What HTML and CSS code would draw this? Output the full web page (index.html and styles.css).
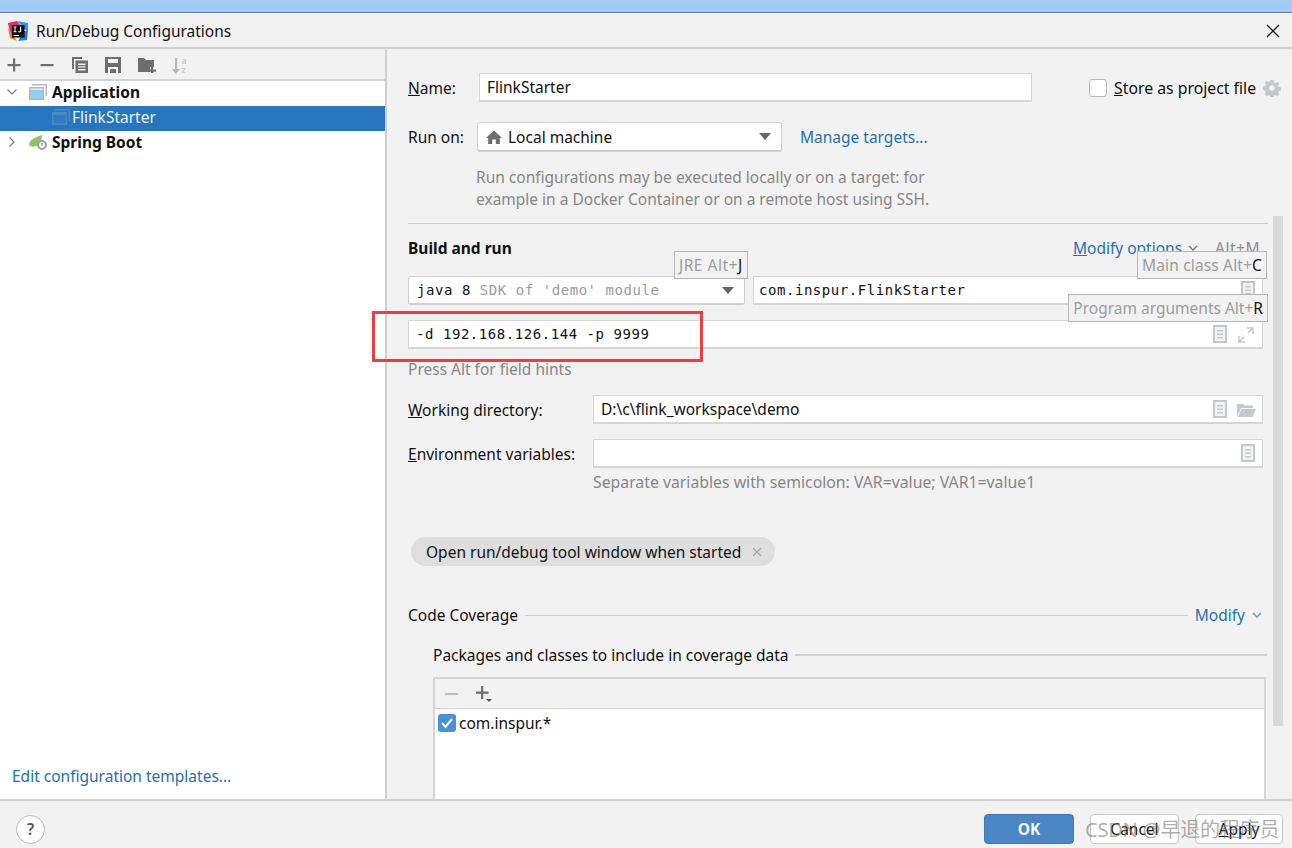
FILE: index.html
```html
<!DOCTYPE html>
<html lang="en">
<head>
<meta charset="utf-8">
<title>Run/Debug Configurations</title>
<link rel="stylesheet" href="styles.css">
</head>
<body>
<svg class="defs" width="0" height="0">
  <symbol id="doc" viewBox="0 0 14 18"><path d="M0 0h14v18H0z" fill="#c3c8cc"/><path d="M2 2h10v14H2z" fill="#f2f2f2"/><path d="M4 5h6v1.500H4zM4 8.500h6V10H4zM4 12h6v1.500H4z" fill="#c3c8cc"/></symbol>
  <symbol id="win" viewBox="0 0 18 16"><path d="M3 0h15v12h-1.500V1.500H3z" fill="#b4bac0"/><path d="M0 3h15v13H0z" fill="#b4bac0"/><path d="M1.500 6h12v8.500h-12z" fill="#8ed0ee"/><path d="M1.500 4.300h12V6h-12z" fill="#e6e8ea"/></symbol>
</svg>
<div class="app">
  <div class="topstrip"></div>
  <header class="titlebar">
    <svg class="logo" width="20" height="20" viewBox="0 0 20 20"><path d="M0 2l9-2 3 4-9 12z" fill="#f0226a"/><path d="M9 0l11 2v10l-6-7z" fill="#2b9af3"/><path d="M20 10l-1 9-9 1 6-10z" fill="#2b7de0"/><path d="M0 7l2 10 7 3z" fill="#f97a12"/><path d="M4 4h12.500v12.500H4z" fill="#000"/><path d="M5.500 14h5.500v1H5.500z" fill="#fff"/><path d="M5.500 5.500h3v1h-1v3.800h1v1h-3v-1h1V6.500h-1zM12 5.500h1.200v4.300c0 1-.6 1.700-1.700 1.700-.8 0-1.300-.3-1.600-.9l.8-.6c.2.300.4.500.7.500.4 0 .6-.3.600-.7z" fill="#fff"/></svg>
    <span class="title">Run/Debug Configurations</span>
    <svg class="close" width="14" height="14" viewBox="0 0 14 14"><path d="M1 1l12 12M13 1L1 13" stroke="#1a1a1a" stroke-width="1.300" fill="none"/></svg>
  </header>
  <div class="content">
    <aside class="sidebar">
      <div class="toolbar">
        <svg width="16" height="16" viewBox="0 0 16 16"><path d="M7 1.500h2.200v13H7zM1.500 7h13v2.200h-13z" fill="#6e6e6e"/></svg>
        <svg width="16" height="16" viewBox="0 0 16 16"><path d="M1.500 7h13v2.200h-13z" fill="#6e6e6e"/></svg>
        <svg width="16" height="16" viewBox="0 0 16 16"><path d="M0 0h10v2H2v10H0z" fill="#6e6e6e"/><path d="M3.500 3.500H16V16H3.500z" fill="#6e6e6e"/><path d="M6 6.500h7.500v1.400H6zM6 9.200h7.500v1.400H6zM6 12h7.500v1.400H6z" fill="#f2f2f2"/></svg>
        <svg width="16" height="16" viewBox="0 0 16 16"><path d="M0 0h16v16H0z" fill="#6e6e6e"/><path d="M3 2h10v4H3zM3 10h10v6H3z" fill="#f2f2f2"/><path d="M5 12h6v4H5z" fill="#6e6e6e"/></svg>
        <svg class="tightr" width="18" height="16" viewBox="0 0 18 16"><path d="M0 1h6l2 2h8v7h-4v5H0z" fill="#6e6e6e"/><path d="M13 10h2.200v2.500H18v2.200h-2.800V17H13v-2.300h-2.500v-2.200H13z" fill="#6e6e6e"/></svg>
        <svg width="18" height="20" viewBox="0 0 18 20"><path d="M4 3h2.200v11H9l-4 5-4-5h3z" fill="#b9b9b9"/><text class="az" x="10.500" y="9">a</text><text class="az" x="10.500" y="18">z</text></svg>
      </div>
      <ul class="tree">
        <li class="node">
          <svg class="chev" width="12" height="12" viewBox="0 0 12 12"><path d="M1.500 3.500L6 8l4.500-4.500" stroke="#7a7a7a" stroke-width="1.200" fill="none"/></svg>
          <svg class="nodeicon" width="18" height="16"><use href="#win"/></svg>
          <b>Application</b>
        </li>
        <li class="node selected">
          <svg class="selicon" width="18" height="16" viewBox="0 0 18 16"><path d="M3 0h15v12h-1.500V1.500H3z" fill="#4a8ac4"/><path d="M0 3h15v13H0z" fill="#4a8ac4"/><path d="M1.500 6h12v8.500h-12z" fill="#2f7cc4"/></svg>
          <span>FlinkStarter</span>
        </li>
        <li class="node">
          <svg class="chev" width="12" height="12" viewBox="0 0 12 12"><path d="M3.500 1.500L8 6l-4.500 4.500" stroke="#7a7a7a" stroke-width="1.200" fill="none"/></svg>
          <svg class="nodeicon" width="18" height="16" viewBox="0 0 18 16"><path d="M0 11C0 6 6 3 13 1c0 6-2 9-5 11-4 1-7 1-8-1z" fill="#8dc76b"/><circle cx="13" cy="11" r="5" fill="#9aa3aa"/><circle cx="13" cy="11" r="3" fill="#f2f2f2"/><path d="M13 9v2.500" stroke="#7c868e" stroke-width="1.200"/></svg>
          <b>Spring Boot</b>
        </li>
      </ul>
      <a class="link templates">Edit configuration templates...</a>
    </aside>
    <main class="form">
      <div class="row namerow">
        <label class="lbl name-lbl"><u>N</u>ame:</label>
        <div class="input nameinput">FlinkStarter</div>
        <span class="check store"></span>
        <span class="storetext"><u>S</u>tore as project file</span>
        <svg class="gear" width="18" height="18" viewBox="0 0 18 18"><path d="M7.500 1h3l.4 2.200 1.500.7 1.900-1.200 2 2-1.200 1.900.7 1.500 2.200.4v3l-2.200.4-.7 1.500 1.200 1.900-2 2-1.900-1.200-1.500.7-.4 2.200h-3l-.4-2.200-1.500-.7-1.900 1.200-2-2 1.200-1.900-.7-1.500L0 10.500v-3l2.200-.4.700-1.500L1.700 3.700l2-2 1.900 1.200 1.500-.7z" fill="#c4c8cc"/><circle cx="9" cy="9" r="2.800" fill="#f2f2f2"/></svg>
      </div>
      <div class="row runrow">
        <label class="lbl run-lbl">Run on:</label>
        <div class="select runselect">
          <svg width="16" height="14" viewBox="0 0 16 14"><path d="M8 .5L16 8h-2.200v6H9.800V9.500H6.200V14H2.200V8H0z" fill="#6e6e6e"/></svg>
          <span>Local machine</span>
          <i class="caret"></i>
        </div>
        <a class="link manage">Manage targets...</a>
      </div>
      <p class="hint runhint">Run configurations may be executed locally or on a target: for<br>example in a Docker Container or on a remote host using SSH.</p>
      <hr class="sep">
      <div class="row buildhead">
        <b class="buildtitle">Build and run</b>
        <a class="link modify"><u>M</u>odify options</a>
        <svg class="mini" width="10" height="6" viewBox="0 0 10 6"><path d="M1 1l4 4 4-4" stroke="#7a7a7a" stroke-width="1.400" fill="none"/></svg>
        <span class="shortcut">Alt+M</span>
      </div>
      <div class="row javarow">
        <div class="select jre mono"><span class="dark">java 8</span>&nbsp;<span class="muted">SDK of 'demo' module</span><i class="caret"></i></div>
        <div class="input mainclass mono">com.inspur.FlinkStarter
          <svg class="fieldicon" width="14" height="18"><use href="#doc"/></svg>
        </div>
      </div>
      <div class="input argsrow mono">-d 192.168.126.144 -p 9999
        <svg class="fieldicon" width="14" height="18"><use href="#doc"/></svg>
        <svg class="expand" width="16" height="16" viewBox="0 0 16 16"><path d="M9 1h6v6M15 1L10 6M1 9v6h6M1 15l5-5" stroke="#c3c8cc" stroke-width="1.500" fill="none"/></svg>
      </div>
      <p class="hint alt">Press Alt for field hints</p>
      <div class="row workrow">
        <label class="lbl wide"><u>W</u>orking directory:</label>
        <div class="input widefield">D:\c\flink_workspace\demo
          <svg class="fieldicon" width="14" height="18"><use href="#doc"/></svg>
          <svg class="folder" width="19" height="16" viewBox="0 0 19 16"><path d="M0 2h6l1.500 1.500H16V6H4L0 15z" fill="#c3c8cc"/><path d="M4.500 7H19l-3.500 8H1z" fill="#c3c8cc"/></svg>
        </div>
      </div>
      <div class="row envrow">
        <label class="lbl wide"><u>E</u>nvironment variables:</label>
        <div class="input widefield">
          <svg class="fieldicon" width="14" height="18"><use href="#doc"/></svg>
        </div>
      </div>
      <p class="hint envhint">Separate variables with semicolon: VAR=value; VAR1=value1</p>
      <div class="chip">Open run/debug tool window when started
        <svg width="10" height="10" viewBox="0 0 10 10"><path d="M1 1l8 8M9 1L1 9" stroke="#a8a8a8" stroke-width="1.200" fill="none"/></svg>
      </div>
      <div class="row coverage">
        <span>Code Coverage</span>
        <span class="rule"></span>
        <a class="link">Modify</a>
        <svg width="10" height="6" viewBox="0 0 10 6"><path d="M1 1l4 4 4-4" stroke="#6a93bd" stroke-width="1.400" fill="none"/></svg>
      </div>
      <div class="row packages">
        <span>Packages and classes to include in coverage data</span>
        <span class="rule strong"></span>
      </div>
      <div class="table">
        <div class="tabletools">
          <svg width="16" height="16" viewBox="0 0 16 16"><path d="M1 7h13v2H1z" fill="#bdbdbd"/></svg>
          <svg width="20" height="20" viewBox="0 0 20 20"><path d="M6 2h2.200v13H6zM1 7.500h12.500v2.200H1z" fill="#6e6e6e"/><path d="M11 15h6l-3 3z" fill="#555"/></svg>
        </div>
        <div class="tablebody">
          <svg width="18" height="18" viewBox="0 0 18 18"><rect width="18" height="18" rx="3" fill="#4a90d9"/><path d="M4 9l3.500 4L14 5" stroke="#fff" stroke-width="2" fill="none"/></svg>
          <span>com.inspur.*</span>
        </div>
      </div>
      <div class="scrollbar"></div>
      <div class="tip tip-jre">JRE Alt+<em>J</em></div>
      <div class="tip tip-main">Main class Alt+<em>C</em></div>
      <div class="tip tip-args">Program arguments Alt+<em>R</em></div>
      <div class="redbox"></div>
    </main>
  </div>
  <footer class="footer">
    <span class="help">?</span>
    <button class="btn ok">OK</button>
    <button class="btn cancel">Cancel</button>
    <button class="btn apply"><u>A</u>pply</button>
    <span class="watermark">CSDN @早退的程序员</span>
  </footer>
</div>
</body>
</html>
```
FILE: styles.css
```css
* { box-sizing: border-box; }
html, body { margin: 0; height: 100%; overflow: hidden; }
body { font-family: "Noto Sans", "Noto Sans CJK SC", sans-serif; font-size: 15.5px; color: #111; background: #f2f2f2; }
.defs { position: absolute; }
.app { width: 1292px; height: 848px; display: flex; flex-direction: column; }
.topstrip { height: 13px; flex: none; background: linear-gradient(#a3cef7, #9dcbf7); border-bottom: 1px solid #6f7f8f; }
.titlebar { height: 36px; flex: none; display: flex; align-items: center; padding: 1px 12px 0 8px; border-bottom: 2px solid #d0d0d0; }
.title { margin-left: 8px; }
.close { margin-left: auto; }
.content { height: 750px; flex: none; display: flex; }
.sidebar { width: 387px; flex: none; display: flex; flex-direction: column; border-right: 2px solid #cfcfcf; }
.toolbar { height: 32px; flex: none; display: flex; align-items: center; gap: 17px; padding: 1px 0 0 6px; border-bottom: 2px solid #d4d4d4; }
.tightr { margin-right: -2px; }
.az { font-size: 9px; fill: #b9b9b9; font-family: "Noto Sans", sans-serif; }
.tree { list-style: none; margin: 0; padding: 0; background: #fff; flex: 1; }
.node { height: 25px; display: flex; align-items: center; padding: 0 0 3px 6px; }
.node b { margin-left: 5px; }
.chev { margin-right: 11px; }
.node.selected { background: #2675bf; color: #eaf2fa; padding-left: 52px; }
.selicon { margin-right: 2px; }
.link { color: #2470b3; }
.templates { background: #fff; padding: 0 12px 13px; line-height: 20px; margin-top: -1px; }
.form { position: relative; flex: 1; padding: 24px 0 0 21px; min-width: 0; }
.row { display: flex; align-items: center; }
.lbl { flex: none; }
.input { background: #fff; border: 1px solid #d6d6d6; border-bottom-width: 2px; display: flex; align-items: center; padding-left: 7px; position: relative; }
.namerow { height: 29px; }
.name-lbl { width: 71px; }
.nameinput { width: 553px; height: 29px; }
.check { width: 18px; height: 18px; margin-left: 57px; background: #fff; border: 1px solid #b8b8b8; border-radius: 3px; }
.storetext { margin-left: 7px; font-size: 15.8px; }
.gear { margin-left: 7px; }
.runrow { height: 30px; margin-top: 20px; }
.run-lbl { width: 69px; }
.select { background: #fff; border: 1px solid #cfcfcf; border-bottom-width: 2px; border-radius: 3px; display: flex; align-items: center; padding-left: 8px; }
.runselect { width: 305px; height: 30px; gap: 6px; }
.caret { margin-left: auto; margin-right: 10px; border: 6px solid transparent; border-top: 7px solid #666; border-bottom: 0; }
.manage { margin-left: 18px; }
.hint { margin: 0; color: #868686; }
.runhint { margin: 14px 0 0 68px; line-height: 22px; }
.sep { height: 1px; margin: 13px 24px 0 0; border: 0; background: #cfcfcf; }
.buildhead { height: 22px; margin-top: 13px; padding-right: 32px; }
.modify { margin-left: auto; }
.mini { margin-left: 6px; }
.shortcut { margin-left: 17px; color: #8c8c8c; letter-spacing: .5px; }
.javarow { margin-top: 17px; gap: 8px; }
.mono { font-family: "DejaVu Sans Mono", monospace; font-size: 14px; letter-spacing: .55px; }
.jre { width: 337px; height: 29px; }
.muted { color: #9a9a9a; }
.mainclass { width: 510px; height: 29px; padding-left: 5px; }
.fieldicon { position: absolute; right: 7px; top: 4px; }
.argsrow { width: 855px; height: 29px; margin-top: 15px; }
.argsrow .fieldicon { right: 35px; }
.expand { position: absolute; right: 8px; top: 6px; }
.alt { margin-top: 10px; line-height: 20px; }
.workrow { margin-top: 16px; }
.envrow { margin-top: 15px; }
.wide { width: 185px; }
.widefield { width: 670px; height: 29px; }
.workrow .fieldicon { right: 35px; }
.folder { position: absolute; right: 6px; top: 6px; }
.envhint { margin: 3px 0 0 185px; line-height: 22px; font-size: 15.8px; }
.chip { width: 364px; height: 29px; margin: 44px 0 0 3px; border-radius: 15px; background: #dedede; display: flex; align-items: center; gap: 11px; padding-left: 15px; }
.coverage { height: 22px; margin-top: 38px; padding-right: 30px; gap: 7px; }
.rule { flex: 1; height: 1px; background: #d0d0d0; }
.packages { height: 22px; margin: 18px 25px 0 25px; gap: 7px; }
.strong { height: 2px; }
.table { height: 122px; margin: 11px 26px 0 25px; border: 2px solid #d4d4d4; border-bottom: 0; display: flex; flex-direction: column; }
.tabletools { height: 30px; flex: none; display: flex; align-items: center; gap: 15px; padding-left: 9px; border-bottom: 1px solid #d4d4d4; }
.tablebody { flex: 1; background: #fff; display: flex; align-items: flex-start; gap: 3px; padding: 5px 3px; line-height: 19px; }
.scrollbar { position: absolute; left: 886px; top: 167px; width: 10px; height: 510px; background: #d9d9d9; }
.tip { position: absolute; height: 28px; line-height: 26px; padding: 0 4px; background: #f2f2f2; border: 1px solid #b5b5b5; color: #9c9c9c; white-space: nowrap; }
.tip em { font-style: normal; color: #111; }
.tip-jre { left: 287px; top: 202px; letter-spacing: .5px; }
.tip-main { right: 25px; top: 202px; letter-spacing: .15px; }
.tip-args { right: 24px; top: 245px; }
.redbox { position: absolute; left: -15px; top: 262px; width: 331px; height: 51px; border: 3px solid #f33c3c; }
.footer { position: relative; flex: 1; display: flex; align-items: center; padding: 9px 9px 0 16px; border-top: 2px solid #d0d0d0; }
.help { width: 29px; height: 29px; border: 1px solid #b8b8b8; border-radius: 50%; background: #fff; display: flex; align-items: center; justify-content: center; color: #555; font-weight: 600; }
.btn { font: inherit; height: 30px; width: 89px; margin-left: 16px; background: #fff; border: 1px solid #c8c8c8; border-radius: 4px; color: #111; padding: 0; }
.apply { width: 88px; }
.ok { margin-left: auto; width: 90px; background: #4a86c5; border-color: #3f79b6; color: #f4f8fc; font-weight: 700; }
.watermark { position: absolute; left: 1085px; top: 16px; font-size: 20px; letter-spacing: -.2px; line-height: 26px; color: rgba(120,120,120,.62); white-space: nowrap; pointer-events: none; }
```
